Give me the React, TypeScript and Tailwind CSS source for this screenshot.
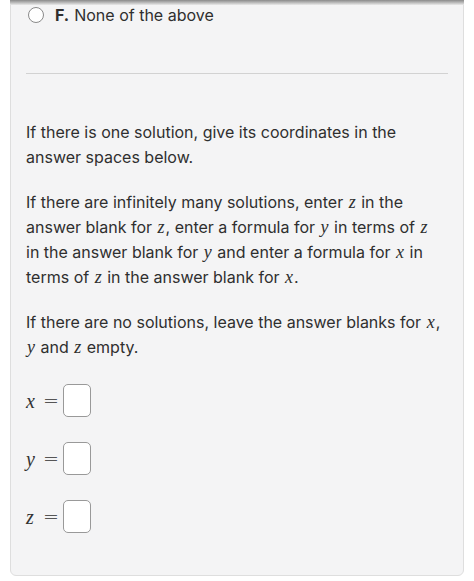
import React from "react";

const M = ({ children }: { children: React.ReactNode }) => (
  <span className="italic text-[18px] mx-[1px]" style={{ fontFamily: '"Liberation Serif", "DejaVu Serif", serif' }}>
    {children}
  </span>
);

const Answer = ({ v }: { v: string }) => (
  <div className="flex items-center h-[33px]">
    <span className="italic text-[20px] text-[#333] w-[12px]" style={{ fontFamily: '"Liberation Serif", serif' }}>{v}</span>
    <span className="text-[19px] text-[#555] ml-[5px] mr-[4px] leading-none" style={{ fontFamily: '"DejaVu Sans", sans-serif', fontWeight: 200 }}>=</span>
    <div className="w-[28px] h-[33px] rounded-[5px] border border-[#999] bg-white" />
  </div>
);

export default function App() {
  return (
    <div className="w-[474px] h-[581px] bg-white relative overflow-hidden" style={{ fontFamily: 'Inter, "Noto Sans", sans-serif' }}>
      <div className="absolute left-[10px] right-[10px] top-0 h-[5px] bg-gradient-to-b from-[#8a8a8a] to-[#eaeaea]" />
      <div className="mx-[10px] h-[576px] bg-[#f4f4f5] border border-[#dedede] rounded-b-[6px] px-[15px] text-[#2f2f2f] text-[16px]">
        <div className="flex items-center pt-[2px] h-[26px]">
          <div className="w-[16px] h-[16px] rounded-full border-[1.5px] border-[#8a8a8a] bg-white ml-[2px]" />
          <span className="ml-[11px] font-bold">F.</span>
          <span className="ml-[5px]">None of the above</span>
        </div>
        <div className="mt-[46px] h-px bg-[#d2d2d2]" />
        <div className="mt-[46px] leading-[25px]">
          <p>If there is one solution, give its coordinates in the answer spaces below.</p>
          <p className="mt-[20px] w-[415px]">
            If there are infinitely many solutions, enter <M>z</M> in the answer blank for <M>z</M>, enter a formula for <M>y</M> in terms of <M>z</M> in the answer blank for <M>y</M> and enter a formula for <M>x</M> in terms of <M>z</M> in the answer blank for <M>x</M>.
          </p>
          <p className="mt-[20px]">
            If there are no solutions, leave the answer blanks for <M>x</M>, <M>y</M> and <M>z</M> empty.
          </p>
        </div>
        <div className="mt-[24px] flex flex-col gap-[25px]">
          <Answer v="x" />
          <Answer v="y" />
          <Answer v="z" />
        </div>
      </div>
    </div>
  );
}
